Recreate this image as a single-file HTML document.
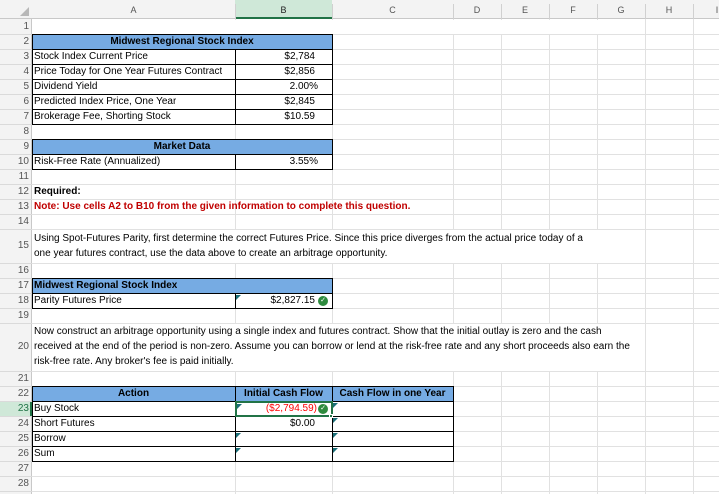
<!DOCTYPE html>
<html><head><meta charset="utf-8"><style>
*{margin:0;padding:0;box-sizing:border-box}
body{width:719px;height:494px;background:#fff;position:relative;overflow:hidden;font-family:"Liberation Sans",sans-serif;font-size:10px;letter-spacing:0;color:#000}
div{position:absolute}
.h{height:1px;background:#e1e1e1;left:32px;width:687px}
.v{width:1px;background:#e1e1e1;top:19px;height:475px}
.rn{left:0;width:29px;text-align:right;color:#555;font-size:10px;letter-spacing:0}
.ch{top:0;height:19px;line-height:21px;text-align:center;color:#555;font-size:9px;letter-spacing:0}
.c{line-height:16px;white-space:nowrap;overflow:hidden}
.bx{border:1px solid #000}
.blue{background:#76abe3}
.b{font-weight:bold}
.tri{width:0;height:0;border-top:5px solid #1b6f78;border-right:5px solid transparent}
.ok{width:10px;height:10px;border-radius:50%;background:#2e8b3e;color:#fff;font-size:7px;line-height:10px;text-align:center;letter-spacing:0}
</style></head><body>
<div style="left:0;top:0;width:719px;height:19px;background:#f3f3f3;border-bottom:1px solid #c8c8c8"></div>
<div style="left:0;top:19px;width:32px;height:475px;background:#f3f3f3;border-right:1px solid #c8c8c8"></div>
<div style="left:20px;top:7px;width:0;height:0;border-left:9px solid transparent;border-bottom:9px solid #b8b8b8"></div>
<div style="left:235px;top:0;width:97px;height:19px;background:#cfe8d8;border-bottom:2px solid #217346"></div>
<div style="left:0;top:401px;width:32px;height:15px;background:#cfe8d8;border-right:2px solid #217346"></div>
<div class="ch" style="left:32px;width:203px">A</div>
<div class="ch" style="left:235px;width:97px;color:#222">B</div>
<div class="ch" style="left:332px;width:121px">C</div>
<div class="ch" style="left:453px;width:48px">D</div>
<div class="ch" style="left:501px;width:48px">E</div>
<div class="ch" style="left:549px;width:48px">F</div>
<div class="ch" style="left:597px;width:48px">G</div>
<div class="ch" style="left:645px;width:48px">H</div>
<div class="ch" style="left:693px;width:48px">I</div>
<div style="left:235px;top:4px;width:1px;height:15px;background:#d0d0d0"></div>
<div style="left:332px;top:4px;width:1px;height:15px;background:#d0d0d0"></div>
<div style="left:453px;top:4px;width:1px;height:15px;background:#d0d0d0"></div>
<div style="left:501px;top:4px;width:1px;height:15px;background:#d0d0d0"></div>
<div style="left:549px;top:4px;width:1px;height:15px;background:#d0d0d0"></div>
<div style="left:597px;top:4px;width:1px;height:15px;background:#d0d0d0"></div>
<div style="left:645px;top:4px;width:1px;height:15px;background:#d0d0d0"></div>
<div style="left:693px;top:4px;width:1px;height:15px;background:#d0d0d0"></div>
<div class="v" style="left:235px"></div><div class="v" style="left:332px"></div><div class="v" style="left:453px"></div><div class="v" style="left:501px"></div><div class="v" style="left:549px"></div><div class="v" style="left:597px"></div><div class="v" style="left:645px"></div><div class="v" style="left:693px"></div>
<div class="h" style="top:34px"></div><div class="h" style="top:49px"></div><div class="h" style="top:64px"></div><div class="h" style="top:79px"></div><div class="h" style="top:94px"></div><div class="h" style="top:109px"></div><div class="h" style="top:124px"></div><div class="h" style="top:139px"></div><div class="h" style="top:154px"></div><div class="h" style="top:169px"></div><div class="h" style="top:184px"></div><div class="h" style="top:199px"></div><div class="h" style="top:214px"></div><div class="h" style="top:229px"></div><div class="h" style="top:263px"></div><div class="h" style="top:278px"></div><div class="h" style="top:293px"></div><div class="h" style="top:308px"></div><div class="h" style="top:323px"></div><div class="h" style="top:371px"></div><div class="h" style="top:386px"></div><div class="h" style="top:401px"></div><div class="h" style="top:416px"></div><div class="h" style="top:431px"></div><div class="h" style="top:446px"></div><div class="h" style="top:461px"></div><div class="h" style="top:476px"></div><div class="h" style="top:491px"></div>
<div style="left:0;top:34px;width:32px;height:1px;background:#dadada;box-shadow:0 15px #dadada,0 30px #dadada,0 45px #dadada,0 60px #dadada,0 75px #dadada,0 90px #dadada,0 105px #dadada,0 120px #dadada,0 135px #dadada,0 150px #dadada,0 165px #dadada,0 180px #dadada,0 195px #dadada,0 229px #dadada,0 244px #dadada,0 259px #dadada,0 274px #dadada,0 289px #dadada,0 337px #dadada,0 352px #dadada,0 367px #dadada,0 382px #dadada,0 397px #dadada,0 412px #dadada,0 427px #dadada,0 442px #dadada,0 457px #dadada"></div>
<div style="left:33px;top:20px;width:612px;height:14px;background:#fff"></div>
<div style="left:33px;top:230px;width:612px;height:33px;background:#fff"></div>
<div style="left:33px;top:324px;width:612px;height:47px;background:#fff"></div>
<div class="rn c" style="top:19px">1</div><div class="rn c" style="top:34px">2</div><div class="rn c" style="top:49px">3</div><div class="rn c" style="top:64px">4</div><div class="rn c" style="top:79px">5</div><div class="rn c" style="top:94px">6</div><div class="rn c" style="top:109px">7</div><div class="rn c" style="top:124px">8</div><div class="rn c" style="top:139px">9</div><div class="rn c" style="top:154px">10</div><div class="rn c" style="top:169px">11</div><div class="rn c" style="top:184px">12</div><div class="rn c" style="top:199px">13</div><div class="rn c" style="top:214px">14</div><div class="rn c" style="top:238px">15</div><div class="rn c" style="top:263px">16</div><div class="rn c" style="top:278px">17</div><div class="rn c" style="top:293px">18</div><div class="rn c" style="top:308px">19</div><div class="rn c" style="top:339px">20</div><div class="rn c" style="top:371px">21</div><div class="rn c" style="top:386px">22</div><div class="rn c" style="top:401px;color:#217346">23</div><div class="rn c" style="top:416px">24</div><div class="rn c" style="top:431px">25</div><div class="rn c" style="top:446px">26</div><div class="rn c" style="top:461px">27</div><div class="rn c" style="top:476px">28</div>

<div class="bx blue" style="left:32px;top:34px;width:301px;height:16px"></div>
<div class="c b" style="left:32px;top:34px;width:300px;text-align:center">Midwest Regional Stock Index</div>
<div class="bx" style="left:32px;top:49px;width:204px;height:16px"></div><div class="bx" style="left:235px;top:49px;width:98px;height:16px"></div>
<div class="bx" style="left:32px;top:64px;width:204px;height:16px"></div><div class="bx" style="left:235px;top:64px;width:98px;height:16px"></div>
<div class="bx" style="left:32px;top:79px;width:204px;height:16px"></div><div class="bx" style="left:235px;top:79px;width:98px;height:16px"></div>
<div class="bx" style="left:32px;top:94px;width:204px;height:16px"></div><div class="bx" style="left:235px;top:94px;width:98px;height:16px"></div>
<div class="bx" style="left:32px;top:109px;width:204px;height:16px"></div><div class="bx" style="left:235px;top:109px;width:98px;height:16px"></div>
<div class="c" style="left:34px;top:49px">Stock Index Current Price</div><div class="c" style="left:236px;top:49px;width:79px;text-align:right">$2,784</div>
<div class="c" style="left:34px;top:64px">Price Today for One Year Futures Contract</div><div class="c" style="left:236px;top:64px;width:79px;text-align:right">$2,856</div>
<div class="c" style="left:34px;top:79px">Dividend Yield</div><div class="c" style="left:236px;top:79px;width:82px;text-align:right">2.00%</div>
<div class="c" style="left:34px;top:94px">Predicted Index Price, One Year</div><div class="c" style="left:236px;top:94px;width:79px;text-align:right">$2,845</div>
<div class="c" style="left:34px;top:109px">Brokerage Fee, Shorting Stock</div><div class="c" style="left:236px;top:109px;width:79px;text-align:right">$10.59</div>

<div class="bx blue" style="left:32px;top:139px;width:301px;height:16px"></div>
<div class="c b" style="left:32px;top:139px;width:300px;text-align:center">Market Data</div>
<div class="bx" style="left:32px;top:154px;width:204px;height:16px"></div><div class="bx" style="left:235px;top:154px;width:98px;height:16px"></div>
<div class="c" style="left:34px;top:154px">Risk-Free Rate (Annualized)</div><div class="c" style="left:236px;top:154px;width:82px;text-align:right">3.55%</div>

<div class="c b" style="left:34px;top:184px">Required:</div>
<div class="c b" style="left:34px;top:199px;color:#c00000">Note: Use cells A2 to B10 from the given information to complete this question.</div>
<div class="c" style="left:34px;top:231px;line-height:15px">Using Spot-Futures Parity, first determine the correct Futures Price. Since this price diverges from the actual price today of a<br>one year futures contract, use the data above to create an arbitrage opportunity.</div>

<div class="bx blue" style="left:32px;top:278px;width:301px;height:16px"></div>
<div class="c b" style="left:34px;top:278px">Midwest Regional Stock Index</div>
<div class="bx" style="left:32px;top:293px;width:204px;height:16px"></div><div class="bx" style="left:235px;top:293px;width:98px;height:16px"></div>
<div class="c" style="left:34px;top:293px">Parity Futures Price</div>
<div class="tri" style="left:236px;top:295px"></div>
<div class="c" style="left:236px;top:293px;width:79px;text-align:right">$2,827.15</div>
<div class="ok" style="left:318px;top:296px">✓</div>

<div class="c" style="left:34px;top:324px;line-height:15px">Now construct an arbitrage opportunity using a single index and futures contract. Show that the initial outlay is zero and the cash<br>received at the end of the period is non-zero. Assume you can borrow or lend at the risk-free rate and any short proceeds also earn the<br>risk-free rate. Any broker's fee is paid initially.</div>

<div class="bx blue" style="left:32px;top:386px;width:204px;height:16px"></div>
<div class="bx blue" style="left:235px;top:386px;width:98px;height:16px"></div>
<div class="bx blue" style="left:332px;top:386px;width:122px;height:16px"></div>
<div class="c b" style="left:32px;top:386px;width:203px;text-align:center">Action</div>
<div class="c b" style="left:235px;top:386px;width:97px;text-align:center">Initial Cash Flow</div>
<div class="c b" style="left:332px;top:386px;width:121px;text-align:center">Cash Flow in one Year</div>
<div class="bx" style="left:32px;top:401px;width:204px;height:16px"></div><div class="bx" style="left:235px;top:401px;width:98px;height:16px"></div><div class="bx" style="left:332px;top:401px;width:122px;height:16px"></div>
<div class="bx" style="left:32px;top:416px;width:204px;height:16px"></div><div class="bx" style="left:235px;top:416px;width:98px;height:16px"></div><div class="bx" style="left:332px;top:416px;width:122px;height:16px"></div>
<div class="bx" style="left:32px;top:431px;width:204px;height:16px"></div><div class="bx" style="left:235px;top:431px;width:98px;height:16px"></div><div class="bx" style="left:332px;top:431px;width:122px;height:16px"></div>
<div class="bx" style="left:32px;top:446px;width:204px;height:16px"></div><div class="bx" style="left:235px;top:446px;width:98px;height:16px"></div><div class="bx" style="left:332px;top:446px;width:122px;height:16px"></div>
<div style="left:235px;top:401px;width:98px;height:16px;border:2px solid #217346"></div>
<div style="left:329px;top:414px;width:4px;height:4px;background:#217346;border:1px solid #fff"></div>
<div class="c" style="left:34px;top:401px">Buy Stock</div>
<div class="c" style="left:34px;top:416px">Short Futures</div>
<div class="c" style="left:34px;top:431px">Borrow</div>
<div class="c" style="left:34px;top:446px">Sum</div>
<div class="c" style="left:236px;top:401px;width:81px;text-align:right;color:#ff0000">($2,794.59)</div>
<div class="ok" style="left:318px;top:404px">✓</div>
<div class="c" style="left:236px;top:416px;width:79px;text-align:right">$0.00</div>
<div class="tri" style="left:237px;top:404px"></div>
<div class="tri" style="left:236px;top:433px"></div>
<div class="tri" style="left:236px;top:448px"></div>
<div class="tri" style="left:333px;top:403px"></div>
<div class="tri" style="left:333px;top:418px"></div>
<div class="tri" style="left:333px;top:433px"></div>
<div class="tri" style="left:333px;top:448px"></div>
</body></html>
